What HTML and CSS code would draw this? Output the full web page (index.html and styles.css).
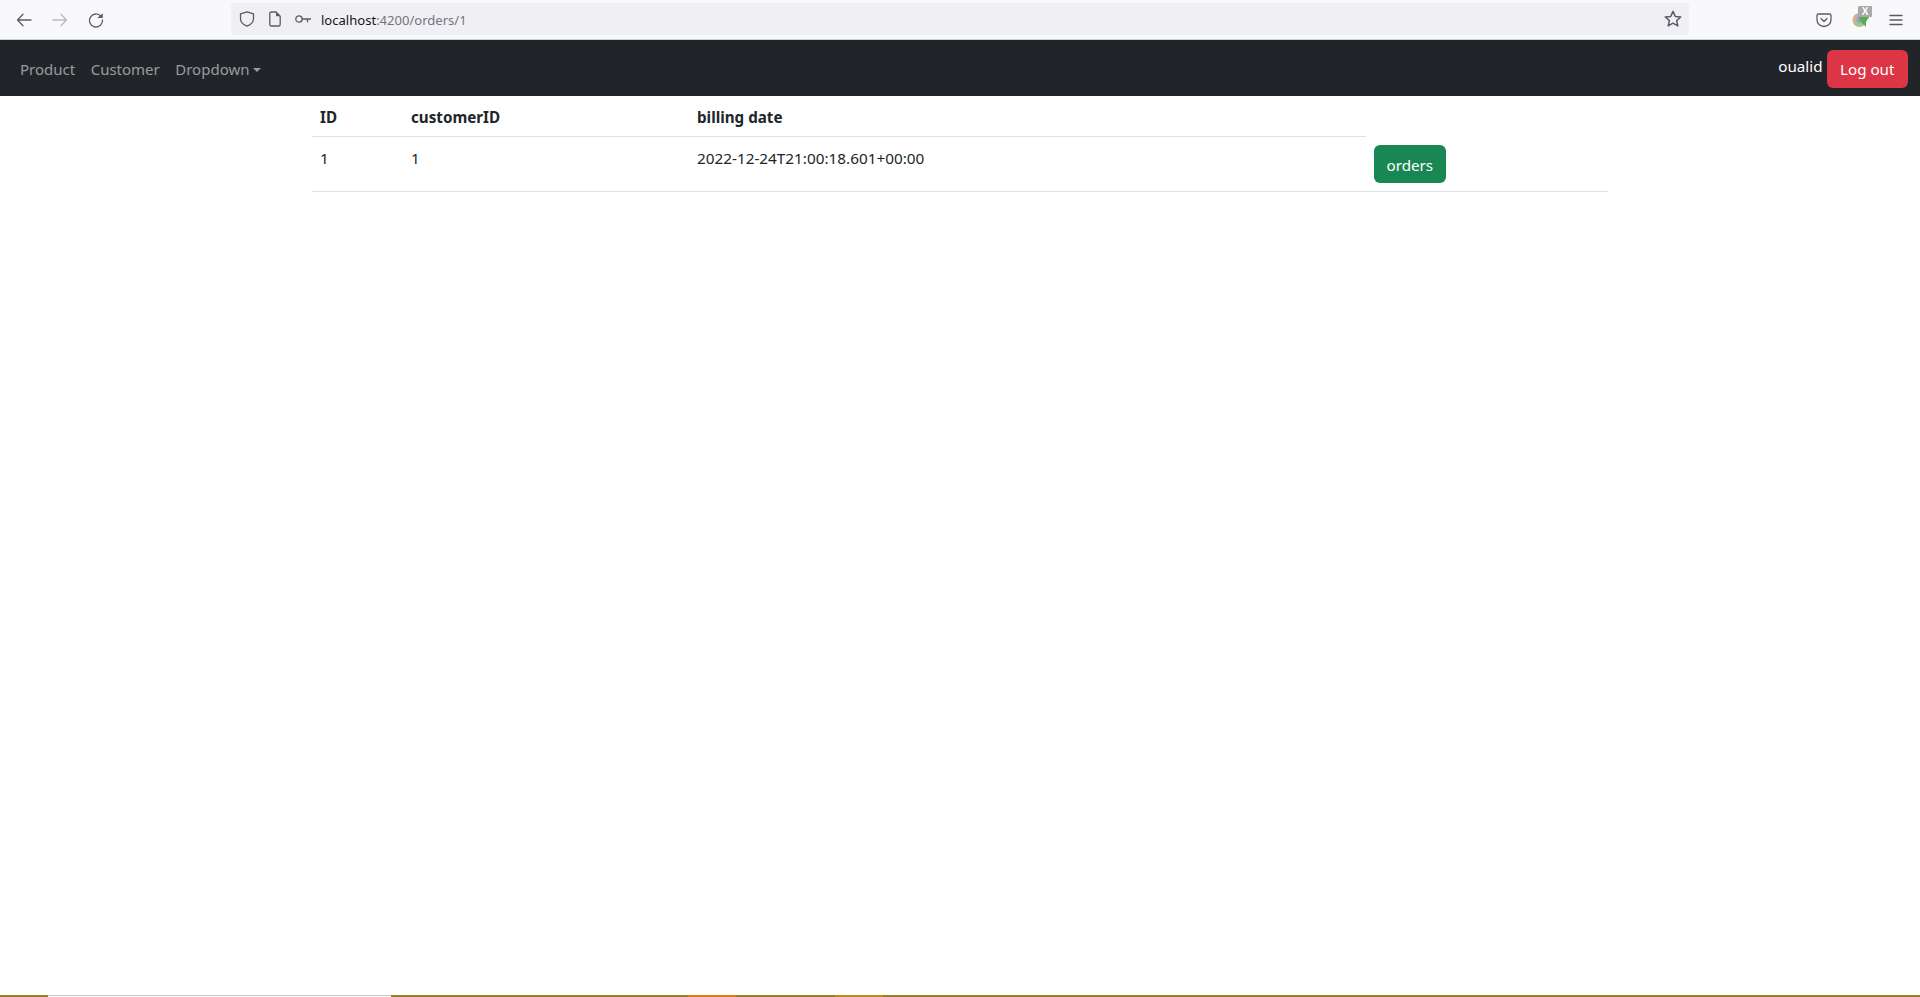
FILE: index.html
```html
<!DOCTYPE html>
<html lang="en">
<head>
<meta charset="utf-8">
<title>orders</title>
<link rel="stylesheet" href="styles.css">
</head>
<body>
<div class="app">
  <header class="toolbar">
    <svg class="ic ic-back" viewBox="0 0 16 16"><path d="M15 8H1.500M7 2.200L1.500 8 7 13.800"/></svg>
    <svg class="ic ic-fwd" viewBox="0 0 16 16"><path d="M1 8h13.500M9 2.200L14.500 8 9 13.800"/></svg>
    <svg class="ic ic-reload" viewBox="0 0 16 16"><path d="M13 4.300A6.500 6.500 0 1 0 14.500 8"/><path class="fill" d="M9.200 6L14.800 1.200V6z"/></svg>
    <div class="urlbar">
      <svg class="ic ic-shield" viewBox="0 0 16 16"><path d="M8 .8L1.500 2.800v5C1.500 11.500 4.800 14 8 15.200c3.200-1.200 6.500-3.700 6.500-7.400v-5z"/></svg>
      <svg class="ic ic-doc" viewBox="0 0 16 16"><path d="M2.800 2.500A1.500 1.500 0 0 1 4.300 1H9l4.200 4.200v8.300a1.500 1.500 0 0 1-1.500 1.500H4.300a1.500 1.500 0 0 1-1.500-1.500z"/><path class="fill" d="M9 1l4.200 4.200H9z"/></svg>
      <svg class="ic ic-key" viewBox="0 0 16 10"><circle cx="4" cy="5" r="3.200"/><path d="M7.200 5H15.500M12.500 5v2.800"/></svg>
      <span class="url"><span class="host">localhost</span>:4200/orders/1</span>
      <svg class="ic ic-star" viewBox="0 0 16 16"><path d="M8 1.200l2 4.500 4.900.5-3.700 3.200 1.100 4.800L8 11.700l-4.300 2.500 1.100-4.800L1.100 6.200 6 5.700z"/></svg>
    </div>
    <svg class="ic ic-pocket" viewBox="0 0 16 16"><path d="M2.500 2h11A1.500 1.500 0 0 1 15 3.500V8A7 6.500 0 0 1 1 8V3.500A1.500 1.500 0 0 1 2.500 2z"/><path d="M5 6.500l3 3 3-3"/></svg>
    <svg class="ext" viewBox="0 0 20 21">
      <circle cx="7.500" cy="14" r="7" fill="#a9c77c"/>
      <path d="M1 14a6.500 6.500 0 0 1 6.500-6.500l1 4-5 5z" fill="#e5a79b"/>
      <circle cx="7.500" cy="14" r="3" fill="#7fa8d8"/>
      <path d="M6 10h12l-4 5.500v5.200l-4-3.400z" fill="#5ea94f"/>
      <rect x="6" y="0" width="14" height="11" rx="1" fill="#a9a9ab"/>
      <text x="13" y="9.200" class="ext-x">X</text>
    </svg>
    <svg class="ic ic-menu" viewBox="0 0 16 16"><path d="M2 3.500h12M2 8h12M2 12.500h12"/></svg>
  </header>

  <nav class="navbar">
    <ul class="nav-links">
      <li><a href="#">Product</a></li>
      <li><a href="#">Customer</a></li>
      <li><a href="#" class="dropdown">Dropdown</a></li>
    </ul>
    <div class="user">
      <span class="username">oualid</span>
      <button class="btn btn-danger" type="button">Log out</button>
    </div>
  </nav>

  <main class="content">
    <table class="orders">
      <colgroup>
        <col class="c-id"><col class="c-cust"><col class="c-date"><col class="c-act">
      </colgroup>
      <thead>
        <tr><th>ID</th><th>customerID</th><th>billing date</th></tr>
      </thead>
      <tbody>
        <tr>
          <td>1</td><td>1</td><td>2022-12-24T21:00:18.601+00:00</td>
          <td class="action"><button class="btn btn-success" type="button">orders</button></td>
        </tr>
      </tbody>
    </table>
  </main>

  <div class="strip">
    <span class="s s-a"></span><span class="s s-white"></span><span class="s s-b"></span>
    <span class="s s-orange"></span><span class="s s-c"></span><span class="s s-gold"></span><span class="s s-d"></span>
  </div>
</div>
</body>
</html>
```

FILE: styles.css
```css
* { box-sizing: border-box; }
html, body { margin: 0; height: 100%; overflow: hidden; }
body { font-family: "Noto Sans", "Open Sans", sans-serif; font-size: 15.2px; line-height: 24px; color: #212529; background: #fff; }
.app { display: flex; flex-direction: column; height: 997px; }

.toolbar { flex: 0 0 40px; display: flex; align-items: center; background: #f9f9fb; border-bottom: 1px solid #cfcfd8; }
.ic { display: block; flex: none; fill: none; stroke: #5b5b66; stroke-width: 1.3; stroke-linecap: round; stroke-linejoin: round; }
.ic .fill { fill: #5b5b66; stroke: none; }
.ic-back { width: 16px; height: 16px; margin-left: 16px; }
.ic-fwd { width: 16px; height: 16px; margin-left: 20px; opacity: .4; }
.ic-reload { width: 16px; height: 16px; margin-left: 20px; }
.urlbar { display: flex; align-items: center; width: 1458px; height: 32px; margin-left: 127px; margin-bottom: 1px; background: #f0f0f4; border-radius: 4px; }
.ic-shield { width: 16px; height: 16px; margin-left: 8px; }
.ic-doc { width: 16px; height: 16px; margin-left: 12px; }
.ic-key { width: 16px; height: 10px; margin-left: 12px; }
.url { margin: 1px 0 0 10px; font-size: 13.050px; color: #74747e; white-space: nowrap; flex: 1; }
.host { color: #15141a; }
.ic-star { width: 18px; height: 18px; margin-right: 7px; }
.ic-pocket { width: 16px; height: 16px; margin-left: 127px; }
.ext { display: block; flex: none; width: 20px; height: 21px; margin-left: 20px; margin-bottom: 6px; }
.ext-x { font-family: "Liberation Sans", sans-serif; font-size: 10px; font-weight: 700; fill: #fff; text-anchor: middle; }
.ic-menu { width: 16px; height: 16px; margin-left: 16px; }

.navbar { flex: 0 0 56px; display: flex; align-items: center; justify-content: space-between; background: #212529; padding: 0 12px 0 20px; }
.nav-links { display: flex; gap: 15.500px; margin: 0; padding: 2px 0 0; font-size: 15px; list-style: none; }
.nav-links a { color: rgba(255, 255, 255, .55); text-decoration: none; }
.dropdown::after { content: ""; display: inline-block; margin-left: 4px; vertical-align: 3px; border-top: 4.500px solid; border-left: 4.500px solid transparent; border-right: 4.500px solid transparent; }
.user { display: flex; align-items: center; gap: 4px; }
.username { color: #fff; margin-top: -5px; }
.btn { display: block; font: inherit; color: #fff; border: 0; border-radius: 6px; height: 38px; padding: 0 13.500px; }
.btn-danger { background: #dc3545; margin-top: 2px; }
.btn-success { background: #198754; padding: 1px 12.500px 0; }

.content { flex: 1; padding: 0 312px; }
.orders { width: 1296px; table-layout: fixed; border-collapse: separate; border-spacing: 0; }
.c-id { width: 91px; }
.c-cust { width: 286px; }
.c-date { width: 677px; }
.c-act { width: 242px; }
.orders th { height: 41px; padding: 2px 8px 0; text-align: left; font-weight: 700; border-bottom: 1px solid #dee2e6; }
.orders td { padding: 9px 8px 7px; font-size: 15.300px; vertical-align: top; border-bottom: 1px solid #dee2e6; }
.orders .action { padding: 8px; font-size: 15.200px; }

.strip { flex: 0 0 2px; display: flex; }
.s { display: block; height: 2px; background: #9b7f22; }
.s-a { width: 48px; }
.s-white { width: 343px; background: #fff; border-top: 1px solid #c4c4c4; }
.s-b { width: 297px; }
.s-orange { width: 48px; background: #df7e10; }
.s-c { width: 99px; }
.s-gold { width: 48px; background: #bd8d1c; }
.s-d { flex: 1; }
```
